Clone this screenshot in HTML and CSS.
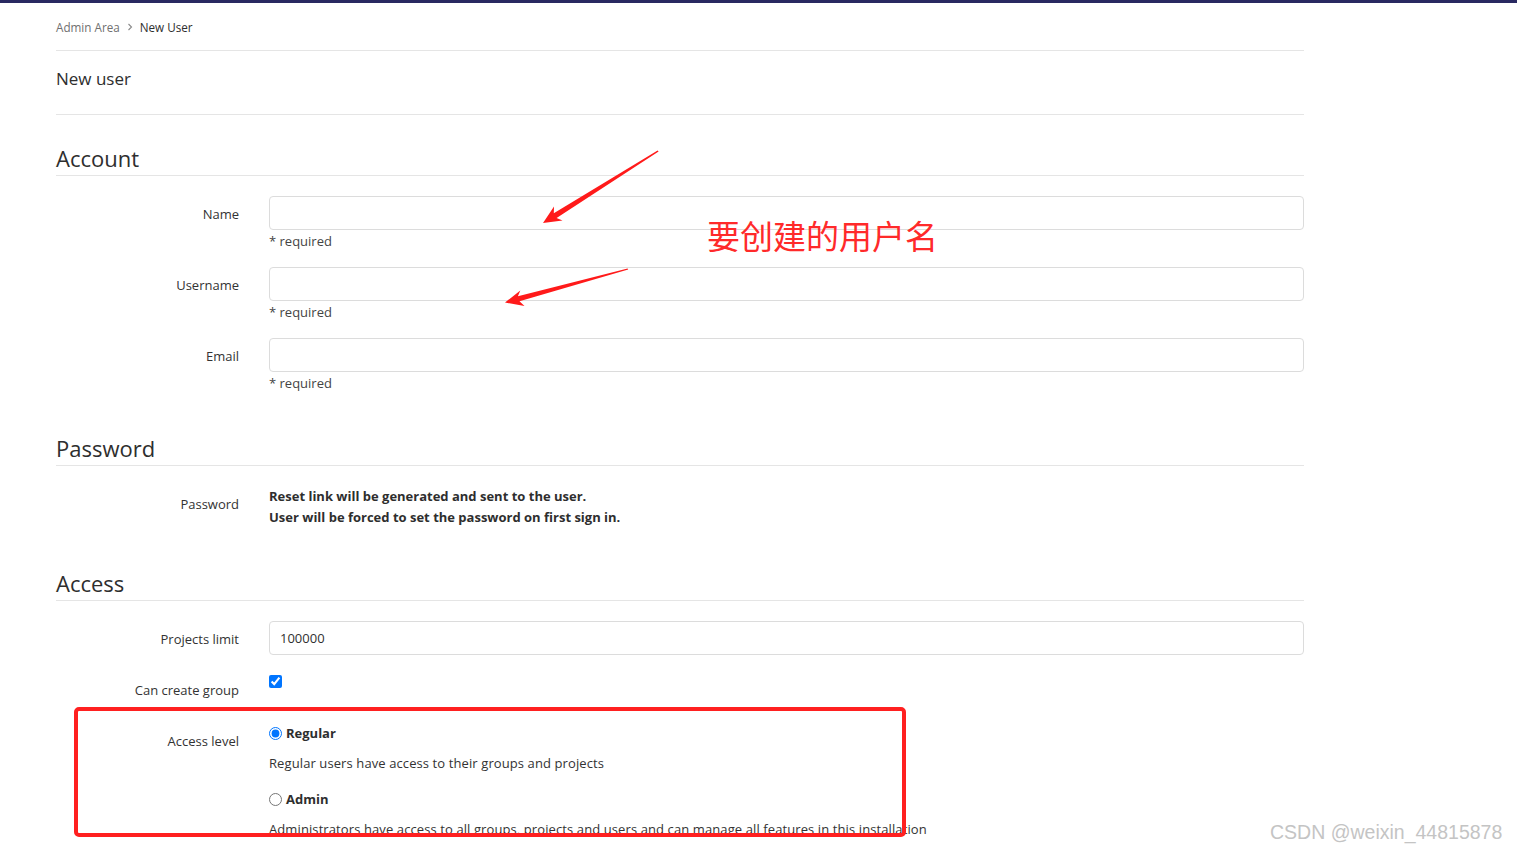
FILE: index.html
```html
<!DOCTYPE html>
<html lang="en">
<head>
  <meta charset="UTF-8" />
  <meta name="viewport" content="width=device-width, initial-scale=1.0" />
  <title>New User · Admin Area</title>
  <link rel="stylesheet" href="styles.css">
</head>
<body>
  <div class="topbar"></div>

  <div class="page">
    <div class="breadcrumb">
      <span class="crumb">Admin Area</span>
      <svg class="crumb-sep" width="8" height="8" viewBox="0 0 8 8"><polyline points="2.5,1 5.5,4 2.5,7" fill="none" stroke="#8a8a8a" stroke-width="1.1"/></svg>
      <span class="crumb-current">New User</span>
    </div>

    <h3 class="page-title">New user</h3>

    <form class="user-form">
      <div class="section section-first">
        <h4 class="section-title">Account</h4>
        <div class="form-row">
          <label class="row-label">Name</label>
          <div class="row-field">
            <input class="text-input" type="text">
            <div class="help">* required</div>
          </div>
        </div>
        <div class="form-row">
          <label class="row-label">Username</label>
          <div class="row-field">
            <input class="text-input" type="text">
            <div class="help">* required</div>
          </div>
        </div>
        <div class="form-row">
          <label class="row-label">Email</label>
          <div class="row-field">
            <input class="text-input" type="text">
            <div class="help">* required</div>
          </div>
        </div>
      </div>

      <div class="section">
        <h4 class="section-title">Password</h4>
        <div class="form-row">
          <label class="row-label">Password</label>
          <div class="row-field pw-note">
            <strong>Reset link will be generated and sent to the user.</strong>
            <strong>User will be forced to set the password on first sign in.</strong>
          </div>
        </div>
      </div>

      <div class="section">
        <h4 class="section-title">Access</h4>
        <div class="form-row">
          <label class="row-label">Projects limit</label>
          <div class="row-field">
            <input class="text-input" type="text" value="100000">
          </div>
        </div>
        <div class="form-row row-check">
          <label class="row-label">Can create group</label>
          <div class="row-field">
            <input class="check" type="checkbox" checked>
          </div>
        </div>
        <div class="form-row row-level">
          <label class="row-label">Access level</label>
          <div class="row-field">
            <label class="radio-line"><input type="radio" name="level" checked> Regular</label>
            <p class="radio-desc">Regular users have access to their groups and projects</p>
            <label class="radio-line radio-admin"><input type="radio" name="level"> Admin</label>
            <p class="radio-desc">Administrators have access to all groups, projects and users and can manage all features in this installation</p>
          </div>
        </div>
      </div>
    </form>
  </div>

  <!-- screenshot annotations -->
  <svg class="marks" width="1517" height="851" viewBox="0 0 1517 851">
    <polygon fill="#ff1a1a" points="543,223 554,206.5 553.8,213.2 657.6,150.6 658.6,151.6 556.6,218 562.5,220.5"/>
    <polygon fill="#ff1a1a" points="505,302.5 520.3,290.5 517.9,296.2 627.6,268.4 628.2,269.6 519.5,301.2 524.5,306"/>
  </svg>
  <div class="note">要创建的用户名</div>
  <div class="red-box"></div>
  <div class="watermark">CSDN @weixin_44815878</div>
</body>
</html>
```

FILE: styles.css
```css
body {
  margin: 0;
  position: relative;
  background: #fff;
  color: #303030;
  font-family: "Open Sans", "Noto Sans", sans-serif;
  font-size: 13px;
  overflow: hidden;
  height: 851px;
}

.topbar {
  height: 3px;
  background: #292961;
}

.page {
  width: 1248px;
  margin-left: 56px;
}

.breadcrumb {
  display: flex;
  align-items: center;
  gap: 6px;
  height: 48px;
  font-size: 11.7px;
  border-bottom: 1px solid #e5e5e5;
  padding-top: 1px;
  box-sizing: border-box;
}

.crumb { color: #707070; }
.crumb-current { color: #2e2e2e; }

.page-title {
  margin: 0;
  padding: 16px 0 23px;
  font-size: 17px;
  line-height: 24px;
  font-weight: 500;
  color: #2e2e2e;
  border-bottom: 1px solid #e5e5e5;
}

.section { padding-top: 24px; }
.section-first { padding-top: 28px; }

.section-title {
  margin: 0 0 20px;
  padding-bottom: 2px;
  font-size: 22px;
  line-height: 30px;
  font-weight: 400;
  color: #2e2e2e;
  border-bottom: 1px solid #e5e5e5;
}

.form-row {
  display: grid;
  grid-template-columns: 183px 1fr;
  column-gap: 30px;
  margin-bottom: 16px;
}

.row-label {
  text-align: right;
  padding-top: 8px;
  line-height: 20px;
  color: #333;
}

.text-input {
  display: block;
  box-sizing: border-box;
  width: 100%;
  height: 34px;
  padding: 0 10px;
  border: 1px solid #dcdcdc;
  border-radius: 4px;
  font-family: inherit;
  font-size: 13px;
  color: #303030;
  outline: none;
}

.help {
  margin-top: 2px;
  line-height: 19px;
  color: #444;
}

.pw-note {
  display: flex;
  flex-direction: column;
  line-height: 21px;
  color: #2e2e2e;
}

.row-check { padding-top: 1px; }
.row-level { padding-top: 7px; }

.check {
  margin: 3px 0 0 0;
  width: 13px;
  height: 13px;
}

.radio-line {
  display: flex;
  align-items: center;
  gap: 4px;
  line-height: 20px;
  font-weight: 700;
  color: #2e2e2e;
}

.radio-line input { margin: 0; width: 13px; height: 13px; }

.radio-admin { margin-top: 16px; }

.radio-desc {
  margin: 10px 0 0;
  line-height: 20px;
  color: #333;
  letter-spacing: 0.1px;
}

.marks {
  position: absolute;
  top: 0;
  left: 0;
  pointer-events: none;
}

.note {
  position: absolute;
  left: 707px;
  top: 215px;
  font-family: "Noto Sans CJK SC", sans-serif;
  font-size: 33px;
  line-height: 40px;
  color: #ff2a2a;
}

.red-box {
  position: absolute;
  left: 74px;
  top: 707px;
  width: 824px;
  height: 122px;
  border: 4px solid #ff2020;
  border-radius: 5px;
}

.watermark {
  position: absolute;
  left: 1270px;
  top: 820px;
  font-family: "Liberation Sans", Arial, sans-serif;
  font-size: 19.5px;
  line-height: 24px;
  color: #c4c4c4;
}
```
